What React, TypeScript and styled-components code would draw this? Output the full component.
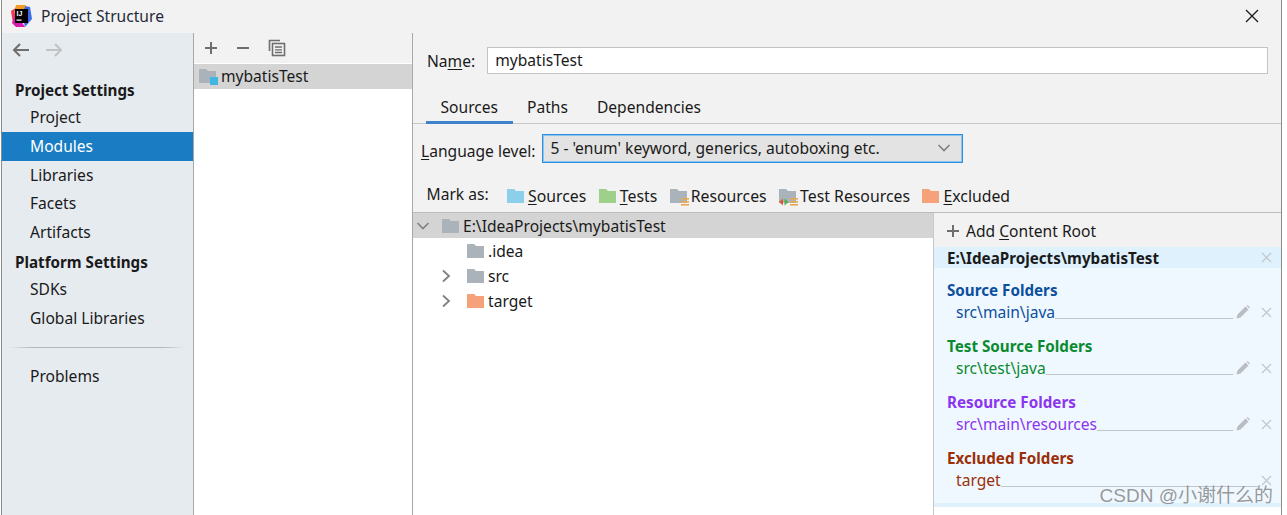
import React from 'react';
import styled, { createGlobalStyle } from 'styled-components';

const GlobalStyle = createGlobalStyle`
  html, body {
    margin: 0;
    padding: 0;
    background: #fff;
  }
  body {
    font-family: "Noto Sans", "Noto Sans CJK SC", sans-serif;
    font-size: 15.6px;
    color: #1a1a1a;
  }
  u {
    text-underline-offset: 2px;
    text-decoration-thickness: 1px;
  }
`;

const Page = styled.div`
  position: relative;
  width: 1287px;
  height: 515px;
  overflow: hidden;
  background: #fff;
  padding: 0 5px 0 1px;
  box-sizing: border-box;
`;

const Frame = styled.div`
  height: 100%;
  border-left: 1px solid #8c8c8c;
  border-right: 1px solid #8c8c8c;
  display: flex;
  flex-direction: column;
  background: #f2f2f2;
`;

const TitleBar = styled.div`
  height: 33px;
  flex: none;
  box-sizing: border-box;
  display: flex;
  align-items: center;
  padding: 0 22px 2px 8px;
  gap: 9px;
  color: #1f2a38;
`;

const TitleText = styled.span`
  flex: 1;
`;

const Body = styled.div`
  flex: 1;
  display: flex;
  min-height: 0;
`;

const Sidebar = styled.nav`
  width: 191px;
  flex: none;
  background: #e6ebf0;
  border-right: 1px solid #a8a8a8;
  display: flex;
  flex-direction: column;
`;

const NavArrows = styled.div`
  height: 34px;
  display: flex;
  align-items: center;
  gap: 15px;
  padding-left: 10px;
  margin-bottom: 9px;
`;

const SectionLabel = styled.div<{ $spaced?: boolean }>`
  height: 27px;
  line-height: 29px;
  margin-top: ${({ $spaced }) => ($spaced ? '1.5px' : '0')};
  padding-left: 13px;
  font-weight: 700;
  font-size: 15.2px;
`;

const NavItem = styled.div<{ $active?: boolean }>`
  height: 28.8px;
  line-height: 28.8px;
  padding-left: 28px;
  color: ${({ $active }) => ($active ? '#fff' : '#1a1a1a')};
  background: ${({ $active }) => ($active ? '#1a7dc4' : 'transparent')};
`;

const NavDivider = styled.div`
  height: 1px;
  background: linear-gradient(90deg, #e6ebf0, #b4b8bb 12%, #b4b8bb 88%, #e6ebf0);
  margin: 14px 8px 14px 8px;
`;

const ModuleColumn = styled.div`
  width: 218px;
  flex: none;
  background: #fff;
  border-right: 1px solid #a8a8a8;
  display: flex;
  flex-direction: column;
`;

const ModuleToolbar = styled.div`
  height: 30px;
  background: #f2f2f2;
  display: flex;
  align-items: center;
  gap: 18px;
  padding: 0 0 0 10px;
  border-bottom: 1px solid #fff;
`;

const ModuleRow = styled.div`
  height: 25px;
  box-sizing: border-box;
  background: #d4d4d4;
  display: flex;
  align-items: center;
  gap: 3px;
  padding: 0 0 2px 4px;
`;

const Detail = styled.div`
  flex: 1;
  min-width: 0;
  display: flex;
  flex-direction: column;
`;

const NameRow = styled.div`
  height: 55px;
  flex: none;
  display: flex;
  align-items: center;
  padding: 0 13px 0 14px;
  gap: 12px;
`;

const TextInput = styled.div`
  flex: 1;
  height: 27px;
  box-sizing: border-box;
  border: 1px solid #c4c4c4;
  background: #fff;
  line-height: 25px;
  padding-left: 7px;
`;

const Tabs = styled.div`
  height: 36px;
  flex: none;
  box-sizing: border-box;
  display: flex;
  padding-left: 13px;
  border-bottom: 1px solid #c9c9c9;
`;

const Tab = styled.div<{ $active?: boolean }>`
  height: 36px;
  box-sizing: border-box;
  padding: 0 14.5px;
  line-height: 38px;
  border-bottom: 3px solid ${({ $active }) => ($active ? '#3f82c9' : 'transparent')};
`;

const LanguageRow = styled.div`
  height: 46px;
  flex: none;
  display: flex;
  align-items: center;
  padding: 3px 0 0 8px;
  box-sizing: border-box;
  gap: 7px;
`;

const LanguageLabel = styled.span`
  margin-top: 4px;
`;

const Select = styled.div`
  width: 421px;
  height: 29px;
  box-sizing: border-box;
  border: 1px solid #2f8fdc;
  outline: 1px solid #8cc4ee;
  outline-offset: -2px;
  background: #e3e3e3;
  display: flex;
  align-items: center;
  justify-content: space-between;
  padding: 0 11px 2px 7px;
`;

const MarkRow = styled.div`
  height: 43px;
  flex: none;
  box-sizing: border-box;
  display: flex;
  align-items: center;
  padding: 9px 0 0 13.5px;
  border-bottom: 1px solid #bcbcbc;
`;

const MarkLabel = styled.span`
  width: 79.5px;
  flex: none;
  margin-bottom: 3px;
`;

const MarkItem = styled.span`
  display: inline-flex;
  align-items: center;
  gap: 2px;
  margin-right: 11.5px;
  font-size: 15.8px;
`;

const Lower = styled.div`
  flex: 1;
  min-height: 0;
  display: flex;
`;

const Tree = styled.div`
  flex: 1;
  min-width: 0;
  background: #fff;
`;

const TreeRow = styled.div<{ $selected?: boolean; $depth: number }>`
  height: 25px;
  display: flex;
  align-items: center;
  gap: 2px;
  background: ${({ $selected }) => ($selected ? '#d4d4d4' : 'transparent')};
  padding-left: ${({ $depth }) => $depth * 23}px;
`;

const Chevron = styled.span<{ $depth: number }>`
  width: 20px;
  margin-right: ${({ $depth }) => 6 + $depth * 2}px;
  display: inline-flex;
  justify-content: center;
  flex: none;
`;

const RootsPanel = styled.aside`
  width: 347px;
  flex: none;
  border-left: 1px solid #c8c8c8;
  background: #f0f8ff;
  display: flex;
  flex-direction: column;
`;

const AddRoot = styled.div`
  height: 34px;
  flex: none;
  background: #f2f2f2;
  display: flex;
  align-items: center;
  gap: 6px;
  padding: 2px 0 0 12px;
  box-sizing: border-box;
`;

const RootHeader = styled.div`
  height: 21px;
  flex: none;
  background: #def1fd;
  display: flex;
  align-items: center;
  justify-content: space-between;
  font-weight: 700;
  font-size: 15.2px;
  padding: 0 9px 0 13px;
`;

const FolderGroup = styled.div`
  padding: 12px 9px 0 13px;
  height: 56px;
  box-sizing: border-box;
  flex: none;
`;

const GroupTitle = styled.div<{ $color: string }>`
  font-weight: 700;
  font-size: 15.2px;
  line-height: 20px;
  color: ${({ $color }) => $color};
`;

const FolderRow = styled.div<{ $color: string }>`
  display: flex;
  align-items: center;
  height: 24px;
  padding-left: 9px;
  color: ${({ $color }) => $color};
`;

const Leader = styled.span`
  flex: 1;
  align-self: flex-end;
  margin-bottom: 5px;
  margin-right: 3px;
  height: 1px;
  background: #c2c6ca;
`;

const RowIcons = styled.span`
  display: inline-flex;
  align-items: center;
  gap: 11px;
  flex: none;
`;

const BottomStrip = styled.div`
  height: 3.5px;
  flex: none;
  margin-top: 11px;
  background: #def1fd;
`;

const BottomBlank = styled.div`
  flex: 1;
  background: #fff;
`;

const Watermark = styled.div`
  position: absolute;
  right: 14px;
  bottom: 8px;
  font-family: "Liberation Sans", "Noto Sans CJK SC", sans-serif;
  font-size: 19px;
  color: rgba(110, 110, 110, 0.7);
`;

const Logo = () => (
  <svg width="22" height="22" viewBox="0 0 22 22">
    <path d="M1 6 L10 0 L6 12 L3 19 Z" fill="#f5375b" />
    <path d="M10 0 L20 2 L22 14 L15 22 Z" fill="#3b6be8" />
    <path d="M2 18 L6 8 L15 22 L6 22 Z" fill="#d81bb0" />
    <path d="M6 0 L16 0 L12 8 L4 8 Z" fill="#f59a23" />
    <rect x="5" y="4" width="13" height="14" fill="#000" />
    <text x="6.5" y="11" fill="#fff" fontFamily="Liberation Sans" fontWeight="700" fontSize="7">IJ</text>
    <rect x="6.5" y="14.5" width="5" height="1.2" fill="#fff" />
  </svg>
);

const CloseIcon = () => (
  <svg width="14" height="14" viewBox="0 0 14 14">
    <path d="M1 1 L13 13 M13 1 L1 13" stroke="#1a1a1a" strokeWidth="1.3" />
  </svg>
);

const Arrow = ({ dir, color }: { dir: 'left' | 'right'; color: string }) => (
  <svg width="18" height="14" viewBox="0 0 18 14">
    <path
      d={dir === 'left' ? 'M17 7 H2 M8 1 L2 7 L8 13' : 'M1 7 H16 M10 1 L16 7 L10 13'}
      fill="none"
      stroke={color}
      strokeWidth="2"
    />
  </svg>
);

const PlusIcon = () => (
  <svg width="14" height="14" viewBox="0 0 14 14">
    <path d="M7 1 V13 M1 7 H13" stroke="#6e6e6e" strokeWidth="2" />
  </svg>
);

const MinusIcon = () => (
  <svg width="14" height="14" viewBox="0 0 14 14">
    <path d="M1 7 H13" stroke="#6e6e6e" strokeWidth="2" />
  </svg>
);

const CopyIcon = () => (
  <svg width="18" height="18" viewBox="0 0 18 18">
    <path d="M1.5 12 V1.5 H12" fill="none" stroke="#6e6e6e" strokeWidth="1.6" />
    <rect x="4.5" y="4.5" width="12" height="12" fill="none" stroke="#6e6e6e" strokeWidth="1.6" />
    <path d="M7 8 H14 M7 10.8 H14 M7 13.5 H14" stroke="#6e6e6e" strokeWidth="1.3" />
  </svg>
);

const FolderSvg = styled.svg`
  flex: none;
  overflow: visible;
`;

const Folder = ({ color, badge }: { color: string; badge?: React.ReactNode }) => (
  <FolderSvg width="20" height="18" viewBox="0 0 20 18">
    <path d="M1 2 H8 L10 4 H18 V16 H1 Z" fill={color} />
    {badge}
  </FolderSvg>
);

const ResourceBadge = () => (
  <g fill="#e8a850">
    <rect x="12" y="11" width="8" height="1.6" />
    <rect x="12" y="14" width="8" height="1.6" />
    <rect x="12" y="17" width="8" height="1.6" />
  </g>
);

const TestBadge = () => (
  <g>
    <path d="M1 15 L5 11.5 V18.5 Z" fill="#e05a3a" />
    <path d="M6.5 11.5 L10.5 15 L6.5 18.5 Z" fill="#4caf50" />
  </g>
);

const ModuleBadge = () => <rect x="12" y="10" width="8" height="8" fill="#40b6e0" />;

const ChevronDown = () => (
  <svg width="14" height="10" viewBox="0 0 14 10">
    <path d="M1.5 2 L7 7.5 L12.5 2" fill="none" stroke="#808080" strokeWidth="1.6" />
  </svg>
);

const ChevronRight = () => (
  <svg width="10" height="14" viewBox="0 0 10 14">
    <path d="M2 1.5 L8 7 L2 12.5" fill="none" stroke="#808080" strokeWidth="1.8" />
  </svg>
);

const SmallX = () => (
  <FolderSvg width="11" height="11" viewBox="0 0 11 11">
    <path d="M1 1 L10 10 M10 1 L1 10" stroke="#c3c7cb" strokeWidth="1.2" />
  </FolderSvg>
);

const Pencil = () => (
  <svg width="14" height="14" viewBox="0 0 14 14">
    <path d="M0.5 13.5 L1.5 9.5 L9.5 1.5 L12.5 4.5 L4.5 12.5 Z M10.5 0.8 L11.5 0 L14 2.5 L13.2 3.5 Z" fill="#b9bdc1" />
  </svg>
);

const groups = [
  { title: 'Source Folders', path: 'src\\main\\java', color: '#0b4f9e', pencil: true },
  { title: 'Test Source Folders', path: 'src\\test\\java', color: '#0a8a2f', pencil: true },
  { title: 'Resource Folders', path: 'src\\main\\resources', color: '#8a35f0', pencil: true },
  { title: 'Excluded Folders', path: 'target', color: '#9a2f08', pencil: false },
];

export default function App() {
  return (
    <>
      <GlobalStyle />
      <Page>
        <Frame>
          <TitleBar>
            <Logo />
            <TitleText>Project Structure</TitleText>
            <CloseIcon />
          </TitleBar>
          <Body>
            <Sidebar>
              <NavArrows>
                <Arrow dir="left" color="#6e6e6e" />
                <Arrow dir="right" color="#c2c2c2" />
              </NavArrows>
              <SectionLabel>Project Settings</SectionLabel>
              <NavItem>Project</NavItem>
              <NavItem $active>Modules</NavItem>
              <NavItem>Libraries</NavItem>
              <NavItem>Facets</NavItem>
              <NavItem>Artifacts</NavItem>
              <SectionLabel $spaced>Platform Settings</SectionLabel>
              <NavItem>SDKs</NavItem>
              <NavItem>Global Libraries</NavItem>
              <NavDivider />
              <NavItem>Problems</NavItem>
            </Sidebar>
            <ModuleColumn>
              <ModuleToolbar>
                <PlusIcon />
                <MinusIcon />
                <CopyIcon />
              </ModuleToolbar>
              <ModuleRow>
                <Folder color="#aab3ba" badge={<ModuleBadge />} />
                mybatisTest
              </ModuleRow>
            </ModuleColumn>
            <Detail>
              <NameRow>
                <span>
                  Na<u>m</u>e:
                </span>
                <TextInput>mybatisTest</TextInput>
              </NameRow>
              <Tabs>
                <Tab $active>Sources</Tab>
                <Tab>Paths</Tab>
                <Tab>Dependencies</Tab>
              </Tabs>
              <LanguageRow>
                <LanguageLabel>
                  <u>L</u>anguage level:
                </LanguageLabel>
                <Select>
                  <span>5 - 'enum' keyword, generics, autoboxing etc.</span>
                  <ChevronDown />
                </Select>
              </LanguageRow>
              <MarkRow>
                <MarkLabel>Mark as:</MarkLabel>
                <MarkItem>
                  <Folder color="#8ccfea" />
                  <span>
                    <u>S</u>ources
                  </span>
                </MarkItem>
                <MarkItem>
                  <Folder color="#9fd08a" />
                  <span>
                    <u>T</u>ests
                  </span>
                </MarkItem>
                <MarkItem>
                  <Folder color="#aab3ba" badge={<ResourceBadge />} />
                  <span>Resources</span>
                </MarkItem>
                <MarkItem>
                  <Folder color="#aab3ba" badge={<><ResourceBadge /><TestBadge /></>} />
                  <span>Test Resources</span>
                </MarkItem>
                <MarkItem>
                  <Folder color="#f5a27a" />
                  <span>
                    <u>E</u>xcluded
                  </span>
                </MarkItem>
              </MarkRow>
              <Lower>
                <Tree>
                  <TreeRow $selected $depth={0}>
                    <Chevron $depth={0}>
                      <ChevronDown />
                    </Chevron>
                    <Folder color="#aab3ba" />
                    E:\IdeaProjects\mybatisTest
                  </TreeRow>
                  <TreeRow $depth={1}>
                    <Chevron $depth={1} />
                    <Folder color="#aab3ba" />
                    .idea
                  </TreeRow>
                  <TreeRow $depth={1}>
                    <Chevron $depth={1}>
                      <ChevronRight />
                    </Chevron>
                    <Folder color="#aab3ba" />
                    src
                  </TreeRow>
                  <TreeRow $depth={1}>
                    <Chevron $depth={1}>
                      <ChevronRight />
                    </Chevron>
                    <Folder color="#f5a27a" />
                    target
                  </TreeRow>
                </Tree>
                <RootsPanel>
                  <AddRoot>
                    <PlusIcon />
                    <span>
                      Add <u>C</u>ontent Root
                    </span>
                  </AddRoot>
                  <RootHeader>
                    E:\IdeaProjects\mybatisTest
                    <SmallX />
                  </RootHeader>
                  {groups.map((group) => (
                    <FolderGroup key={group.title}>
                      <GroupTitle $color={group.color}>{group.title}</GroupTitle>
                      <FolderRow $color={group.color}>
                        {group.path}
                        <Leader />
                        <RowIcons>
                          {group.pencil && <Pencil />}
                          <SmallX />
                        </RowIcons>
                      </FolderRow>
                    </FolderGroup>
                  ))}
                  <BottomStrip />
                  <BottomBlank />
                </RootsPanel>
              </Lower>
            </Detail>
          </Body>
        </Frame>
        <Watermark>CSDN @小谢什么的</Watermark>
      </Page>
    </>
  );
}
